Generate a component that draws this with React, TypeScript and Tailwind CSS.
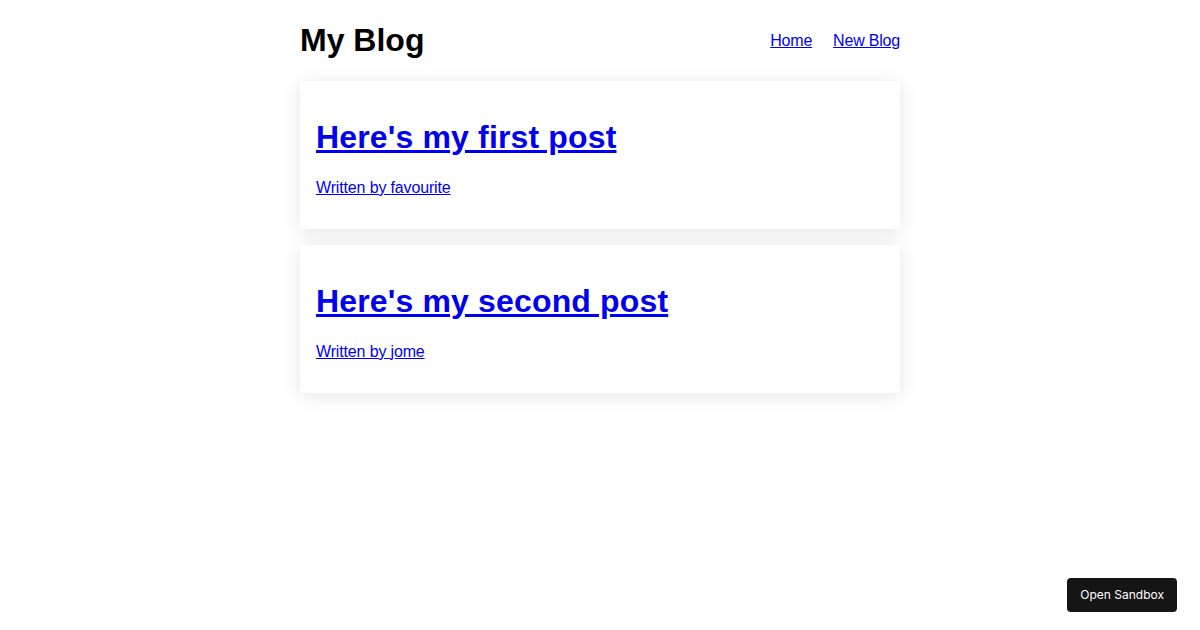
import React from "react";

const posts = [
  { title: "Here's my first post", author: "favourite" },
  { title: "Here's my second post", author: "jome" },
];

export default function App() {
  return (
    <div className="min-h-[630px] bg-white text-black" style={{ fontFamily: '"Liberation Sans", Arial, sans-serif' }}>
      <div className="mx-auto w-[600px]">
        <nav className="flex items-center justify-between pt-[22px] pb-[22px]">
          <h1 className="text-[32px] font-bold leading-[37px] m-0">My Blog</h1>
          <div className="flex gap-[21px] text-[16px] leading-[18px] tracking-[-0.2px]">
            <a href="#" className="text-[#0000ee] underline">Home</a>
            <a href="#" className="text-[#0000ee] underline">New Blog</a>
          </div>
        </nav>
        <div className="flex flex-col gap-4">
          {posts.map((p) => (
            <div key={p.title} className="bg-white px-4 pt-[38px] pb-[32px] shadow-[0_3px_20px_rgba(0,0,0,0.1)]">
              <a href="#" className="block w-fit text-[#0000ee] underline">
                <h2 className="text-[32px] font-bold leading-[37px] tracking-[0.15px]">{p.title}</h2>
              </a>
              <a href="#" className="mt-[23px] block w-fit text-[16px] leading-[18px] tracking-[-0.15px] text-[#0000ee] underline">
                Written by {p.author}
              </a>
            </div>
          ))}
        </div>
      </div>
      <button
        className="fixed right-[23px] bottom-[18px] rounded-[4px] bg-[#151515] px-[13px] py-[9px] text-[12px] leading-[16px] text-white"
        style={{ fontFamily: 'Inter, "Liberation Sans", sans-serif' }}
      >
        Open Sandbox
      </button>
    </div>
  );
}
